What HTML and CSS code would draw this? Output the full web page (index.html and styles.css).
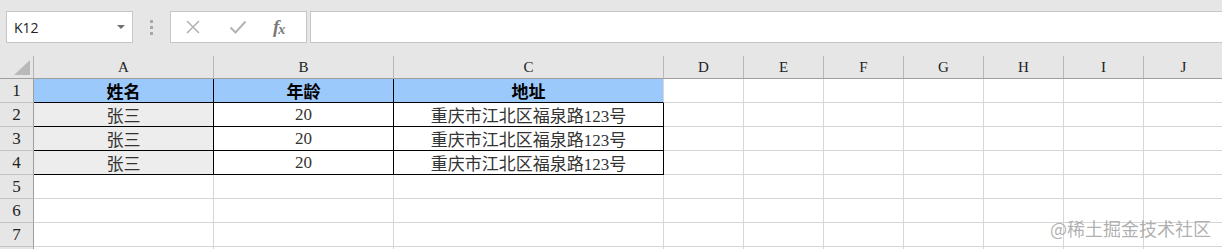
FILE: index.html
```html
<!DOCTYPE html>
<html lang="zh-CN">
<head>
<meta charset="utf-8">
<title>Sheet</title>
<link rel="stylesheet" href="styles.css">
</head>
<body>
<div class="app">
  <div class="toolbar">
    <div class="namebox">
      <span class="ref">K12</span>
      <svg class="caret" width="8" height="5" viewBox="0 0 8 5"><path d="M0 0h8L4 4z" fill="#707070"/></svg>
    </div>
    <div class="grip"><i></i><i></i><i></i></div>
    <div class="fxbtns">
      <svg class="btn" width="16" height="16" viewBox="0 0 16 16"><path d="M2 2L14 14M14 2L2 14" stroke="#b4b4b4" stroke-width="1.6" fill="none"/></svg>
      <svg class="btn" width="18" height="16" viewBox="0 0 18 16"><path d="M1.5 8.5L6.5 13.5L16.5 2.5" stroke="#b4b4b4" stroke-width="2" fill="none"/></svg>
      <span class="fx">f<sub>x</sub></span>
    </div>
    <div class="formula"></div>
  </div>

  <div class="sheet">
    <div class="corner"><svg width="16" height="15" viewBox="0 0 16 15"><path d="M0 15H16V0z" fill="#b9b9b9"/></svg></div>
    <div class="ch">A</div><div class="ch">B</div><div class="ch">C</div><div class="ch">D</div><div class="ch">E</div><div class="ch">F</div><div class="ch">G</div><div class="ch">H</div><div class="ch">I</div><div class="ch">J</div>

    <div class="rh">1</div>
    <div class="c hd bl">姓名</div><div class="c hd bl">年龄</div><div class="c hd bb">地址</div>
    <div class="c"></div><div class="c"></div><div class="c"></div><div class="c"></div><div class="c"></div><div class="c"></div><div class="c"></div>

    <div class="rh">2</div>
    <div class="c nm bl">张三</div><div class="c bl">20</div><div class="c bl">重庆市江北区福泉路123号</div>
    <div class="c"></div><div class="c"></div><div class="c"></div><div class="c"></div><div class="c"></div><div class="c"></div><div class="c"></div>

    <div class="rh">3</div>
    <div class="c nm bl">张三</div><div class="c bl">20</div><div class="c bl">重庆市江北区福泉路123号</div>
    <div class="c"></div><div class="c"></div><div class="c"></div><div class="c"></div><div class="c"></div><div class="c"></div><div class="c"></div>

    <div class="rh">4</div>
    <div class="c nm bl">张三</div><div class="c bl">20</div><div class="c bl">重庆市江北区福泉路123号</div>
    <div class="c"></div><div class="c"></div><div class="c"></div><div class="c"></div><div class="c"></div><div class="c"></div><div class="c"></div>

    <div class="rh">5</div>
    <div class="c"></div><div class="c"></div><div class="c"></div><div class="c"></div><div class="c"></div><div class="c"></div><div class="c"></div><div class="c"></div><div class="c"></div><div class="c"></div>

    <div class="rh">6</div>
    <div class="c"></div><div class="c"></div><div class="c"></div><div class="c"></div><div class="c"></div><div class="c"></div><div class="c"></div><div class="c"></div><div class="c"></div><div class="c"></div>

    <div class="rh">7</div>
    <div class="c"></div><div class="c"></div><div class="c"></div><div class="c"></div><div class="c"></div><div class="c"></div><div class="c"></div><div class="c"></div><div class="c"></div><div class="c"></div>

    <div class="rh"></div>
    <div class="c"></div><div class="c"></div><div class="c"></div><div class="c"></div><div class="c"></div><div class="c"></div><div class="c"></div><div class="c"></div><div class="c"></div><div class="c"></div>
  </div>

  <div class="watermark">@稀土掘金技术社区</div>
</div>
</body>
</html>
```

FILE: styles.css
```css
html, body {
  margin: 0;
  padding: 0;
}
body {
  width: 1222px;
  height: 249px;
  overflow: hidden;
  background: #e6e6e6;
  font-family: "Liberation Serif", "Noto Sans CJK SC", serif;
}
.app {
  position: relative;
  width: 1222px;
  height: 249px;
  overflow: hidden;
}
.toolbar {
  height: 56px;
  box-sizing: border-box;
  padding: 11px 0 0 6px;
  display: flex;
  align-items: flex-start;
}
.namebox {
  width: 127px;
  height: 32px;
  box-sizing: border-box;
  background: #fff;
  border: 1px solid #c6c6c6;
  display: flex;
  align-items: center;
  justify-content: space-between;
  padding: 0 7px 0 7px;
  font-family: "Open Sans", "Noto Sans", sans-serif;
  font-size: 14px;
  color: #222;
}
.namebox .caret {
  margin-top: 1px;
}
.grip {
  width: 37px;
  height: 32px;
  display: flex;
  flex-direction: column;
  align-items: center;
  justify-content: center;
  gap: 3px;
}
.grip i {
  display: block;
  width: 3px;
  height: 3px;
  background: #a8a8a8;
}
.fxbtns {
  width: 137px;
  height: 32px;
  box-sizing: border-box;
  background: #fff;
  border: 1px solid #c6c6c6;
  display: flex;
  align-items: center;
  padding-left: 14px;
  gap: 28px;
}
.fx {
  font-family: "Liberation Serif", serif;
  font-style: italic;
  font-weight: bold;
  font-size: 19px;
  color: #7a7a7a;
  margin-left: -2px;
  letter-spacing: -1px;
}
.fx sub {
  font-size: 14px;
  vertical-align: -1px;
}
.formula {
  margin-left: 3px;
  flex: 1;
  height: 32px;
  box-sizing: border-box;
  background: #fff;
  border: 1px solid #c6c6c6;
  border-right: none;
}
.sheet {
  display: grid;
  grid-template-columns: 34px 180px 180px 270px repeat(7, 80px);
  grid-template-rows: 23px;
  grid-auto-rows: 24px;
  width: 1224px;
}
.sheet > div {
  box-sizing: border-box;
  display: flex;
  align-items: center;
  justify-content: center;
  font-size: 17px;
  color: #111;
}
.corner {
  background: #e6e6e6;
  border-right: 1px solid #b3b3b3;
  border-bottom: 1px solid #9e9e9e;
  justify-content: flex-end !important;
  align-items: flex-end !important;
  padding: 0 3px 3px 0;
}
.ch {
  background: #e6e6e6;
  border-right: 1px solid #b8b8b8;
  border-bottom: 1px solid #9e9e9e;
  font-size: 15px !important;
  color: #222 !important;
  padding-top: 1px;
}
.rh {
  background: #e6e6e6;
  border-right: 1px solid #9e9e9e;
  border-bottom: 1px solid #c4c4c4;
  font-size: 17px !important;
  color: #222 !important;
}
.c {
  background: #fff;
  border-right: 1px solid #d6d6d6;
  border-bottom: 1px solid #d6d6d6;
  color: #333 !important;
}
.c.bl {
  border-right-color: #000;
  border-bottom-color: #000;
}
.c.bb {
  border-bottom-color: #000;
}
.c.hd {
  background: #9cc9fc;
  font-weight: bold;
  color: #000 !important;
}
.c.nm {
  background: #ededed;
}
.watermark {
  position: absolute;
  right: 11px;
  top: 216px;
  font-family: "Noto Sans CJK SC", "Noto Sans", sans-serif;
  font-size: 18px;
  color: rgba(150, 150, 150, 0.75);
  line-height: 24px;
}
```
